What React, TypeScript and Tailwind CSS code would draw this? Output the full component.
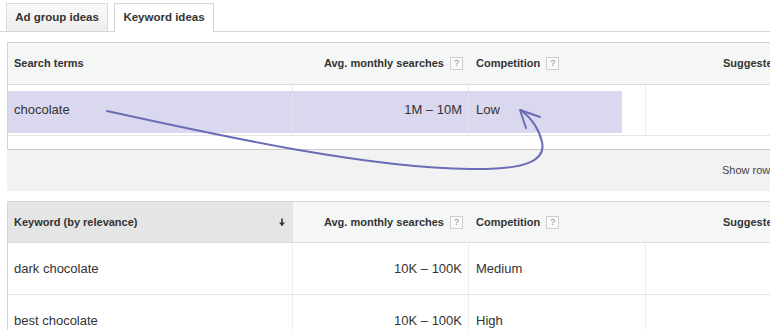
import React from 'react'

const font = "font-['Liberation_Sans',Arial,Helvetica,sans-serif]"

function Help() {
  return (
    <span className="ml-[6px] inline-flex h-[13px] w-[13px] items-center justify-center border border-[#cfcfcf] bg-[#fafafa] text-[9px] font-normal leading-none text-[#888]">
      ?
    </span>
  )
}

function HeaderCells() {
  return (
    <>
      <div className="flex w-[176px] items-center justify-end pr-[6px] text-[11px] font-bold">
        Avg. monthly searches
        <Help />
      </div>
      <div className="flex w-[177px] items-center pl-[7px] text-[11px] font-bold">
        Competition
        <Help />
      </div>
      <div className="flex flex-1 items-center pl-[77px] text-[11px] font-bold">Suggested bid</div>
    </>
  )
}

function Row({ term, searches, competition }: { term: string; searches: string; competition: string }) {
  return (
    <div className="flex h-[52px] border-b border-[#e6e6e6] text-[13px]">
      <div className="flex w-[285px] items-center border-r border-[#ececec] pl-[6px]">{term}</div>
      <div className="flex w-[176px] items-center justify-end border-r border-[#ececec] pr-[6px]">{searches}</div>
      <div className="flex w-[177px] items-center border-r border-[#ececec] pl-[7px]">{competition}</div>
      <div className="flex-1" />
    </div>
  )
}

export default function App() {
  return (
    <div className={`relative h-[330px] w-[770px] overflow-hidden bg-white text-[#333] ${font}`}>
      {/* Tabs */}
      <div className="flex h-[32px] items-end gap-[6px] border-b border-[#d6d6d6] pl-[6px]">
        <div className="flex h-[28px] w-[102px] items-center justify-center border border-b-0 border-[#dcdcdc] bg-gradient-to-b from-[#f9f9f9] to-[#eeeeee] text-[11.5px] font-bold text-[#333]">
          Ad group ideas
        </div>
        <div className="-mb-px flex h-[29px] w-[100px] items-center justify-center border border-b-0 border-[#d6d6d6] bg-white text-[11.5px] font-bold text-[#333]">
          Keyword ideas
        </div>
      </div>

      {/* Search terms table */}
      <div className="ml-[7px] mt-[10px] w-[900px] border-l border-t border-[#d2d2d2]">
        <div className="flex h-[42px] border-b border-[#dcdcdc] bg-[#f5f7f7]">
          <div className="flex w-[285px] items-center pl-[6px] text-[11px] font-bold">Search terms</div>
          <HeaderCells />
        </div>
        <div className="relative">
          <div className="absolute left-0 top-[6px] h-[42px] w-[614px] bg-[#dad8ee]" />
          <div className="relative flex h-[51px] border-b border-[#e6e6e6] text-[13px]">
            <div className="flex w-[285px] items-center border-r border-[#e4e2f0] pl-[6px]">chocolate</div>
            <div className="flex w-[176px] items-center justify-end border-r border-[#e4e2f0] pr-[6px]">1M – 10M</div>
            <div className="flex w-[177px] items-center border-r border-[#ececec] pl-[7px]">Low</div>
            <div className="flex-1" />
          </div>
        </div>
        <div className="h-[13px]" />
      </div>

      {/* Show rows bar */}
      <div className="ml-[7px] flex h-[42px] w-[900px] items-center border-t border-[#cccccc] bg-[#f2f2f2] pl-[715px] text-[11px] text-[#444]">
        Show rows:
      </div>

      {/* Keyword ideas table */}
      <div className="ml-[7px] mt-[10px] w-[900px] border-l border-t border-[#d6d6d6]">
        <div className="flex h-[41px] border-b border-[#dcdcdc] bg-[#f5f7f7]">
          <div className="flex w-[285px] items-center justify-between bg-[#e4e5e5] pl-[6px] pr-[7px] text-[11px] font-bold">
            Keyword (by relevance)
            <svg width="8" height="9" viewBox="0 0 8 9">
              <path d="M4 0.5V7.5" stroke="#333" strokeWidth="1.6" />
              <path d="M1 4.5L4 8L7 4.5Z" fill="#333" />
            </svg>
          </div>
          <HeaderCells />
        </div>
        <Row term="dark chocolate" searches="10K – 100K" competition="Medium" />
        <Row term="best chocolate" searches="10K – 100K" competition="High" />
      </div>

      {/* Hand-drawn arrow */}
      <svg className="pointer-events-none absolute left-0 top-0" width="770" height="330" viewBox="0 0 770 330">
        <path
          d="M107 111 C 230 138 370 168 470 169 C 528 170 546 160 542 142 C 539 128 531 118 521 110"
          fill="none"
          stroke="#6a6db5"
          strokeWidth="2"
          strokeLinecap="round"
        />
        <path d="M540 117 L520 110 L526 128" fill="none" stroke="#6a6db5" strokeWidth="2" strokeLinecap="round" strokeLinejoin="round" />
      </svg>
    </div>
  )
}
